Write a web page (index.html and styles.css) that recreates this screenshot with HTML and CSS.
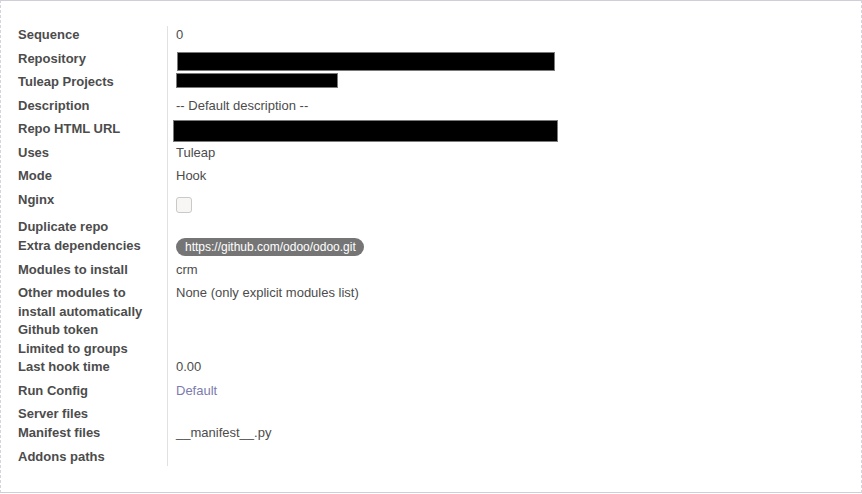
FILE: index.html
```html
<!DOCTYPE html>
<html lang="en">
<head>
  <meta charset="UTF-8">
  <title>Repository</title>
  <link rel="stylesheet" href="styles.css">
</head>
<body>
  <div class="sheet">
    <div class="group">
      <div class="label">Sequence</div>
      <div class="value"><span class="text">0</span></div>

      <div class="label">Repository</div>
      <div class="value"><span class="text hidden">s</span><span class="redact redact-repo"></span></div>

      <div class="label">Tuleap Projects</div>
      <div class="value"><span class="text hidden">&nbsp;</span><span class="redact redact-projects"></span></div>

      <div class="label">Description</div>
      <div class="value"><span class="text">-- Default description --</span></div>

      <div class="label">Repo HTML URL</div>
      <div class="value"><span class="text hidden">&nbsp;</span><span class="redact redact-url"></span></div>

      <div class="label">Uses</div>
      <div class="value"><span class="text">Tuleap</span></div>

      <div class="label">Mode</div>
      <div class="value"><span class="text">Hook</span></div>

      <div class="label">Nginx</div>
      <div class="value"><span class="checkbox"></span></div>

      <div class="label">Duplicate repo</div>
      <div class="value empty"></div>

      <div class="label">Extra dependencies</div>
      <div class="value"><span class="text"><span class="tag">https://github.com/odoo/odoo.git</span></span></div>

      <div class="label">Modules to install</div>
      <div class="value"><span class="text">crm</span></div>

      <div class="label">Other modules to install automatically</div>
      <div class="value"><span class="text">None (only explicit modules list)</span></div>

      <div class="label">Github token</div>
      <div class="value empty"></div>

      <div class="label">Limited to groups</div>
      <div class="value empty"></div>

      <div class="label">Last hook time</div>
      <div class="value"><span class="text">0.00</span></div>

      <div class="label">Run Config</div>
      <div class="value"><a class="text link" href="#">Default</a></div>

      <div class="label">Server files</div>
      <div class="value empty"></div>

      <div class="label">Manifest files</div>
      <div class="value"><span class="text">__manifest__.py</span></div>

      <div class="label">Addons paths</div>
      <div class="value empty"></div>
    </div>
  </div>
</body>
</html>
```

FILE: styles.css
```css
* {
  margin: 0;
  padding: 0;
  box-sizing: border-box;
}

body {
  font-family: "Liberation Sans", Arial, sans-serif;
  font-size: 13px;
  line-height: 1.42857;
  color: #4c4c4c;
  background: #fff;
}

/* Form sheet */
.sheet {
  width: 862px;
  height: 493px;
  border-top: 1px solid #cfcfd7;
  border-bottom: 1px solid #cfcfd7;
  border-left: 1px dashed #d4d4dc;
  border-right: 1px dashed #d4d4dc;
  padding: 25px 0 0 17px;
}

.group {
  display: grid;
  grid-template-columns: 149px 540px;
}

.label {
  font-weight: bold;
  width: 140px;
}

.value {
  position: relative;
  border-left: 1px solid #e1e1e1;
  padding-left: 8px;
}

.value .text {
  display: block;
  margin-bottom: 5px;
}

.value .hidden {
  color: transparent;
}

.link {
  color: #7c7bad;
  text-decoration: none;
}

/* Checkbox */
.checkbox {
  display: block;
  width: 16px;
  height: 16px;
  margin: 6px 0 5px;
  border: 1px solid #c9c9c9;
  border-radius: 3px;
  background: #f7f6f4;
}

/* Many2many tag */
.tag {
  display: inline-block;
  height: 18px;
  line-height: 18px;
  margin-top: 1px;
  padding: 0 8px 0 9px;
  border-radius: 9px;
  background: #757575;
  color: #fff;
  font-size: 12px;
  vertical-align: top;
}

/* Redacted values */
.redact {
  position: absolute;
  background: #000;
  border: 1px solid #7a7a7a;
}

.redact-repo {
  left: 9px;
  top: 2px;
  width: 378px;
  height: 19px;
}

.redact-projects {
  left: 8px;
  top: 0;
  width: 162px;
  height: 15px;
}

.redact-url {
  left: 5px;
  top: 0;
  width: 385px;
  height: 22px;
}
```
